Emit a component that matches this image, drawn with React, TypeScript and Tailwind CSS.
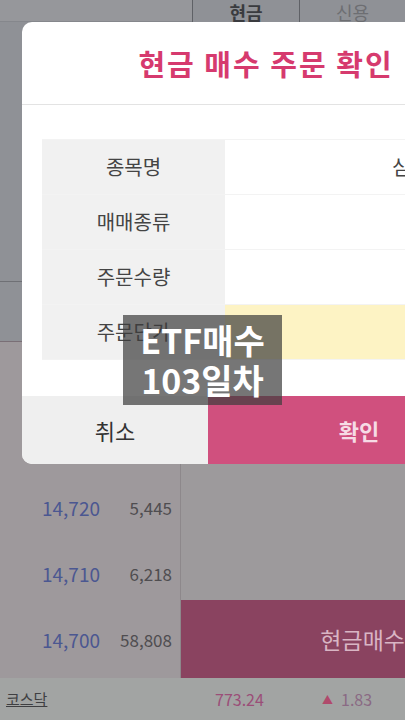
import React from "react";

const rows = [
  { label: "종목명", value: "심텍", highlight: false },
  { label: "매매종류", value: "", highlight: false },
  { label: "주문수량", value: "", highlight: false },
  { label: "주문단가", value: "", highlight: true },
];

const book = [
  { price: "14,720", qty: "5,445" },
  { price: "14,710", qty: "6,218" },
  { price: "14,700", qty: "58,808" },
];

export default function App() {
  return (
    <div
      className="relative h-[720px] w-[405px] overflow-hidden bg-[#8f9196]"
      style={{ fontFamily: '"Noto Sans CJK KR", "Noto Sans", sans-serif' }}
    >
      {/* dimmed page behind the dialog */}
      <div className="flex h-full flex-col">
        <div className="flex h-[22px] shrink-0">
          <div className="w-[192px] border-b border-[#85878c] bg-[#96979b]" />
          <div className="flex w-[108px] items-start justify-center border-x border-[#5f6166] pt-[2px] text-[18px] font-bold leading-[20px] text-[#3a3b3f]">
            현금
          </div>
          <div className="flex flex-1 items-start justify-center pt-[2px] text-[18px] leading-[20px] text-[#6d6e72]">
            신용
          </div>
        </div>
        <div className="h-[260px] shrink-0 border-b border-[#6f7075]" />
        <div className="h-[60px] shrink-0 border-b border-[#7a6f76]" />
        <div className="flex flex-1 bg-[#9e999c]">
          <div className="flex w-[180px] flex-col justify-end pb-[5px]">
            {book.map((b) => (
              <div key={b.price} className="flex h-[66px] items-center">
                <div className="w-[100px] text-right text-[19px] text-[#4b5791]">{b.price}</div>
                <div className="w-[72px] text-right text-[17px] text-[#4f4d50]">{b.qty}</div>
              </div>
            ))}
          </div>
          <div className="flex flex-1 flex-col justify-end border-l border-[#8d888b] bg-[#9d9a9c]">
            <div className="flex h-[78px] items-center justify-end bg-[#8a4360] text-[23px] text-[#d9b5c4]">
              현금매수
            </div>
          </div>
        </div>
        <div className="flex h-[42px] shrink-0 items-center bg-[#a2a4a3] text-[15px]">
          <span className="ml-[6px] w-[209px] text-[#3f3f42] underline">코스닥</span>
          <span className="w-[107px] text-[16px] text-[#9b4e78]">773.24</span>
          <span className="text-[11px] text-[#b04a6c]">▲</span>
          <span className="ml-[8px] text-[16px] text-[#8a6a84]">1.83</span>
        </div>
      </div>

      {/* confirm dialog */}
      <div className="absolute left-[22px] top-[22px] flex w-[488px] flex-col overflow-hidden rounded-[10px] bg-white">
        <div className="flex h-[83px] items-center justify-center border-b border-[#e3e3e3] pt-[2px] text-[29px] font-bold tracking-[2px] text-[#d63a6e]">
          현금 매수 주문 확인
        </div>
        <div className="mx-[20px] mt-[34px] flex flex-col border-t border-[#f3f3f3]">
          {rows.map((r) => (
            <div key={r.label} className="flex h-[55px] border-b border-[#f3f3f3]">
              <div className="flex w-[183px] items-center justify-center bg-[#f1f1f1] text-[20px] text-[#444]">
                {r.label}
              </div>
              <div
                className={
                  r.highlight
                    ? "flex flex-1 items-center bg-[#fdf3c4] pl-[167px] text-[20px] text-[#444]"
                    : "flex flex-1 items-center pl-[167px] text-[20px] text-[#444]"
                }
              >
                {r.value}
              </div>
            </div>
          ))}
        </div>
        <div className="mt-[36px] flex h-[68px]">
          <div className="flex w-[186px] items-center justify-center bg-[#efefef] text-[22px] text-[#333]">
            취소
          </div>
          <div className="flex flex-1 items-center justify-center bg-[#d0507e] text-[22px] font-bold text-[#f6dbe5]">
            확인
          </div>
        </div>
      </div>

      {/* video caption */}
      <div className="absolute left-[123px] top-[315px] flex h-[90px] w-[159px] flex-col items-center justify-center bg-[#3c3c3c]/70 text-[34px] font-semibold leading-[40px] text-white">
        <span>ETF매수</span>
        <span>103일차</span>
      </div>
    </div>
  );
}
